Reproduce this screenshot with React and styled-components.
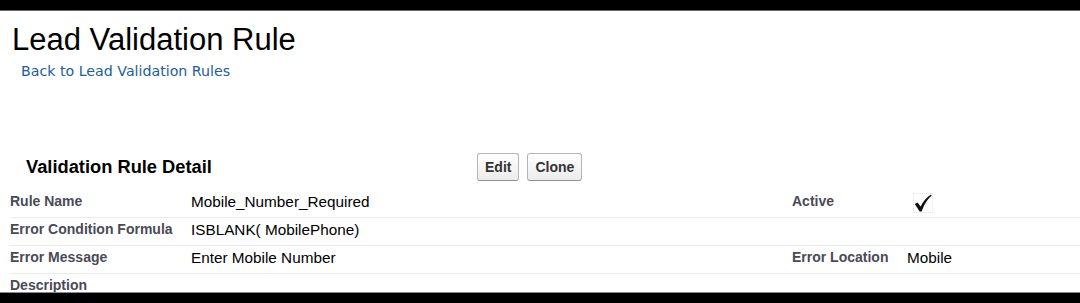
import styled, { createGlobalStyle } from "styled-components"

const GlobalStyle = createGlobalStyle`
  html, body {
    margin: 0;
    padding: 0;
    background: #ffffff;
  }
`

const Page = styled.div`
  display: flex;
  flex-direction: column;
  width: 1080px;
  height: 303px;
  overflow: hidden;
  background: #ffffff;
  font-family: Arial, "Liberation Sans", sans-serif;
`

const Bar = styled.div`
  flex: 0 0 10px;
  background: #000000;
  border-top: ${props => (props.$bottom ? "1px solid #8a8a8a" : "none")};
  border-bottom: ${props => (props.$bottom ? "none" : "1px solid #6a6a6a")};
`

const Content = styled.div`
  flex: 1;
  overflow: hidden;
`

const PageTitle = styled.h1`
  margin: 12px 0 0 12px;
  font-size: 31px;
  line-height: 34px;
  font-weight: normal;
  color: #000000;
`

const BackLink = styled.a`
  display: block;
  margin: 6px 0 0 21px;
  font-family: "DejaVu Sans", Verdana, sans-serif;
  font-size: 14.2px;
  line-height: 16px;
  color: #215e98;
  text-decoration: none;
`

const BlockHeader = styled.div`
  display: flex;
  align-items: center;
  margin-top: 74px;
  padding-left: 26px;
  height: 28px;
`

const BlockTitle = styled.h2`
  margin: 0;
  width: 451px;
  font-size: 18.3px;
  font-weight: bold;
  color: #000000;
`

const Buttons = styled.div`
  display: flex;
  gap: 8px;
`

const Button = styled.button`
  height: 28px;
  padding: 0 7px;
  font-family: Arial, "Liberation Sans", sans-serif;
  font-size: 14px;
  font-weight: bold;
  color: #333333;
  background: linear-gradient(#ffffff, #ececec);
  border: 1px solid #b5b5b5;
  border-bottom-color: #8f8f8f;
  border-radius: 3px;
`

const DetailTable = styled.div`
  margin: 9px 0 0 10px;
`

const Row = styled.div`
  display: grid;
  grid-template-columns: 181px 601px 115px 1fr;
  align-items: start;
  height: 27px;
  border-bottom: 1px solid #ebebeb;
`

const Label = styled.div`
  padding-top: 3px;
  font-size: 14px;
  line-height: 16px;
  font-weight: bold;
  color: #4a4a56;
  white-space: nowrap;
`

const Value = styled.div`
  padding-top: 4px;
  font-size: 15.3px;
  line-height: 16px;
  color: #000000;
  white-space: nowrap;
`

const CheckBox = styled.span`
  display: inline-flex;
  align-items: center;
  justify-content: center;
  width: 18px;
  height: 18px;
  margin: 0 0 0 7px;
  outline: 1px dotted #e6e6e6;
`

const rows = [
  { label: "Rule Name", value: "Mobile_Number_Required", label2: "Active", checked: true },
  { label: "Error Condition Formula", value: "ISBLANK( MobilePhone)" },
  { label: "Error Message", value: "Enter Mobile Number", label2: "Error Location", value2: "Mobile" },
  { label: "Description", value: "" },
]

function CheckIcon() {
  return (
    <svg width="18" height="18" viewBox="0 0 18 18">
      <path
        d="M0.8 10 L3.6 8.4 L6.6 12.4 C9.3 7.4 12.6 3.4 17 0.6 L17.6 1.6 C13.6 5.2 10.3 10.2 7.6 17.4 L5.6 17.4 Z"
        fill="#111111"
      />
    </svg>
  )
}

export default function App() {
  return (
    <Page>
      <GlobalStyle />
      <Bar />
      <Content>
        <PageTitle>Lead Validation Rule</PageTitle>
        <BackLink href="#">Back to Lead Validation Rules</BackLink>
        <BlockHeader>
          <BlockTitle>Validation Rule Detail</BlockTitle>
          <Buttons>
            <Button>Edit</Button>
            <Button>Clone</Button>
          </Buttons>
        </BlockHeader>
        <DetailTable>
          {rows.map(row => (
            <Row key={row.label}>
              <Label>{row.label}</Label>
              <Value>{row.value}</Value>
              <Label>{row.label2}</Label>
              <Value>
                {row.checked ? (
                  <CheckBox>
                    <CheckIcon />
                  </CheckBox>
                ) : (
                  row.value2
                )}
              </Value>
            </Row>
          ))}
        </DetailTable>
      </Content>
      <Bar $bottom />
    </Page>
  )
}
